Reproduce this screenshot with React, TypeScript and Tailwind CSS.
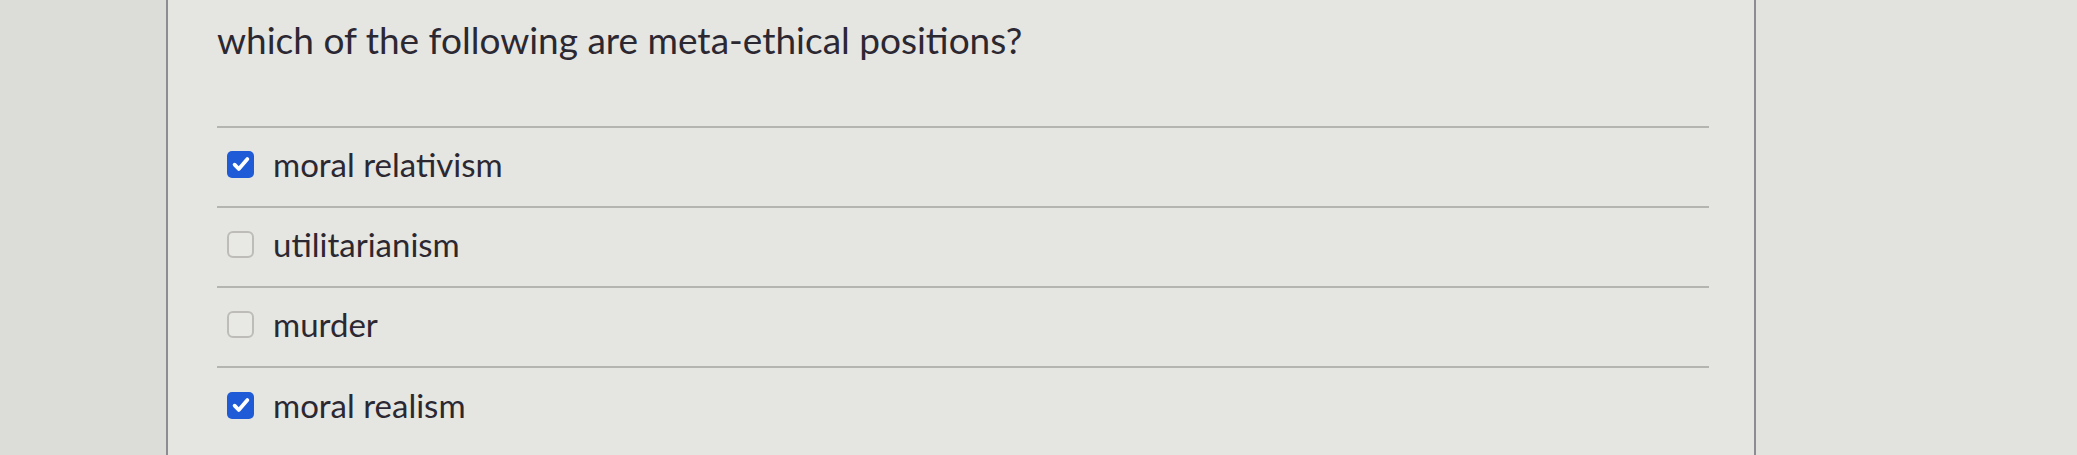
import React from 'react';

interface Option {
    label: string;
    checked: boolean;
}

const options: Option[] = [
    { label: 'moral relativism', checked: true },
    { label: 'utilitarianism', checked: false },
    { label: 'murder', checked: false },
    { label: 'moral realism', checked: true },
];

const CheckBox: React.FC<{ checked: boolean }> = ({ checked }) =>
    checked ? (
        <span className="flex h-[27px] w-[27px] items-center justify-center rounded-[5px] bg-[#1f5bd6]">
            <svg width="22" height="22" viewBox="0 0 20 20" fill="none">
                <path d="M4.2 10.6l3.8 3.9 7.8-9" stroke="#ffffff" strokeWidth="3.4" strokeLinecap="round" strokeLinejoin="round" />
            </svg>
        </span>
    ) : (
        <span className="block h-[27px] w-[27px] rounded-[6px] border-2 border-[#bdbcb8] bg-[#e8e8e4]" />
    );

export default function App() {
    return (
        <div
            className="flex h-[455px] w-[2077px] overflow-hidden bg-[#dfdfdb]"
            style={{ fontFamily: 'Lato, "Open Sans", sans-serif' }}
        >
            {/* left gutter */}
            <div className="w-[166px] shrink-0 bg-[#dcdcd8]" />

            {/* quiz panel */}
            <div className="w-[1590px] shrink-0 border-x-2 border-[#8c8c92] bg-[#e5e5e1] pl-[49px] pt-[18px]">
                <h1 className="text-[37px] leading-[44px] text-[#2c2832]">which of the following are meta-ethical positions?</h1>

                <ul className="mt-[64px] w-[1492px] border-t-2 border-[#b4b4b0]">
                    {options.map((opt) => (
                        <li
                            key={opt.label}
                            className="flex h-[80px] items-center gap-[19px] border-b-2 border-[#b4b4b0] pb-[6px] pl-[10px] last:border-b-0"
                        >
                            <CheckBox checked={opt.checked} />
                            <span className="text-[33px] leading-[40px] text-[#2c2832]">{opt.label}</span>
                        </li>
                    ))}
                </ul>
            </div>

            {/* right area */}
            <div className="flex-1 bg-[#e2e2de]" />
        </div>
    );
}
